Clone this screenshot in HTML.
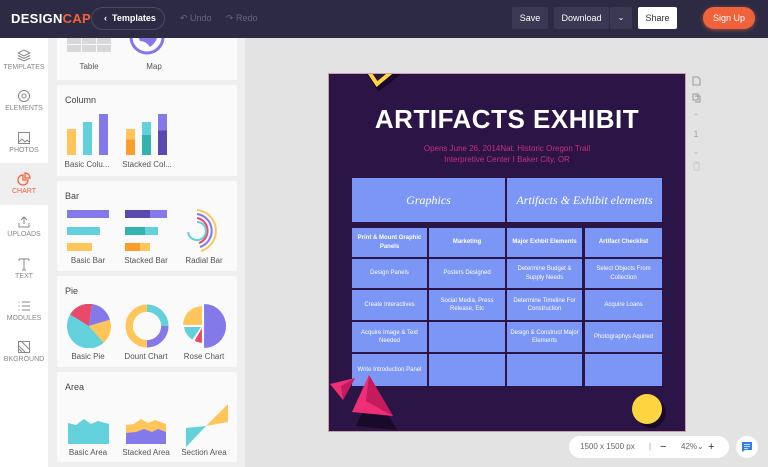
<!DOCTYPE html>
<html><head><meta charset="utf-8"><style>
*{margin:0;padding:0;box-sizing:border-box}
body{width:768px;height:467px;overflow:hidden;background:#e3e3e3;font-family:"Liberation Sans",sans-serif;position:relative}
.a{position:absolute}
.top{left:0;top:0;width:768px;height:38px;background:#2d2b44;z-index:5}
.nav{left:0;top:38px;width:48px;height:429px;background:#fff}
.ni{position:absolute;left:0;width:48px;text-align:center;font-size:7px;color:#888}
.panel{left:48px;top:38px;width:197px;height:429px;background:#efefef;overflow:hidden}
.card{position:absolute;left:9px;width:180px;background:#fafafa;border-radius:2px}
.ct{position:absolute;left:8px;top:10px;font-size:9px;color:#444}
.lb{position:absolute;font-size:8px;color:#555;text-align:center;width:60px}
.c{position:absolute;background:#7b96f5;color:#fff;font-size:6px;text-align:center;display:flex;align-items:center;justify-content:center;line-height:8.5px;padding:0 2px}
.h{font-weight:bold}
</style></head><body>
<div class="a top">
 <div class="a" style="left:11px;top:11px;font-size:13px;font-weight:bold;color:#fff;letter-spacing:0.3px">DESIGN<span style="color:#f0623a">CAP</span></div>
 <div class="a" style="left:91px;top:7px;width:74px;height:23px;border:1px solid #4a4862;border-radius:12px;color:#fff;font-size:9px;font-weight:bold;line-height:21px;padding-left:12px">&lsaquo;&nbsp;&nbsp;Templates</div>
 <div class="a" style="left:180px;top:13px;font-size:9px;color:#66657a">↶ Undo</div>
 <div class="a" style="left:226px;top:13px;font-size:9px;color:#66657a">↷ Redo</div>
 <div class="a" style="left:512px;top:7px;width:36px;height:22px;background:#3a3852;border-radius:2px;color:#fff;font-size:9px;text-align:center;line-height:22px">Save</div>
 <div class="a" style="left:554px;top:7px;width:55px;height:22px;background:#3a3852;border-radius:2px;color:#fff;font-size:9px;text-align:center;line-height:22px">Download</div>
 <div class="a" style="left:610px;top:7px;width:22px;height:22px;background:#3a3852;border-radius:2px;color:#fff;font-size:8px;text-align:center;line-height:22px">&#8964;</div>
 <div class="a" style="left:638px;top:7px;width:39px;height:22px;background:#fff;border-radius:2px;color:#333;font-size:9px;text-align:center;line-height:22px">Share</div>
 <div class="a" style="left:703px;top:7px;width:52px;height:22px;background:#f0623a;border-radius:11px;color:#fff;font-size:9px;text-align:center;line-height:22px;box-shadow:0 1px 4px rgba(240,98,58,.6)">Sign Up</div>
</div>
<div class="a nav">
 <div class="ni" style="top:10px"><svg width="14" height="14" viewBox="0 0 14 14" fill="none" stroke="#888"><path d="M7 2L13 5 7 8 1 5Z M1 7.5L7 10.5 13 7.5 M1 10L7 13 13 10"/></svg><br>TEMPLATES</div>
 <div class="ni" style="top:51px"><svg width="14" height="14" viewBox="0 0 14 14" fill="none" stroke="#888"><circle cx="7" cy="7" r="5.5"/><circle cx="7" cy="7" r="2"/></svg><br>ELEMENTS</div>
 <div class="ni" style="top:93px"><svg width="14" height="14" viewBox="0 0 14 14" fill="none" stroke="#888"><rect x="1.5" y="1.5" width="11" height="11"/><path d="M2 11L5 8 8 11 10 9 12 11"/></svg><br>PHOTOS</div>
 <div class="ni" style="top:125px;height:42px;background:#efefef;padding-top:9px;color:#f0623a"><svg width="14" height="14" viewBox="0 0 14 14" fill="none" stroke="#f0623a" stroke-width="1.3"><path d="M6 3A5 5 0 1 0 11 8H6Z M8 1V6H13A5 5 0 0 0 8 1Z"/></svg><br>CHART</div>
 <div class="ni" style="top:177px"><svg width="14" height="14" viewBox="0 0 14 14" fill="none" stroke="#888"><path d="M7 9V2 M4 5L7 2 10 5 M2 8V12H12V8"/></svg><br>UPLOADS</div>
 <div class="ni" style="top:219px"><svg width="14" height="14" viewBox="0 0 14 14" fill="none" stroke="#888"><path d="M2 2H12 M7 2V13 M5 13H9 M2 2V4 M12 2V4"/></svg><br>TEXT</div>
 <div class="ni" style="top:261px"><svg width="14" height="14" viewBox="0 0 14 14" fill="none" stroke="#888"><path d="M5 3H13 M5 7H13 M5 11H13 M1.5 3H2.5 M1.5 7H2.5 M1.5 11H2.5"/></svg><br>MODULES</div>
 <div class="ni" style="top:302px"><svg width="14" height="14" viewBox="0 0 14 14" fill="none" stroke="#888"><rect x="1.5" y="1.5" width="11" height="11"/><path d="M2 6L8 12 M2 9L5 12 M5 2L12 9"/></svg><br>BKGROUND</div>
</div>
<div class="a panel">
 <div class="card" style="top:-4px;height:46px">
  <div class="a" style="left:10px;top:4px;width:44px;height:14px;background:repeating-linear-gradient(90deg,#d8d8d8 0 14px,transparent 14px 15px)"></div>
  <div class="a" style="left:10px;top:10px;width:44px;height:1px;background:#fafafa"></div>
  <svg class="a" style="left:71px;top:-16px" width="38" height="38" viewBox="0 0 38 38"><circle cx="19" cy="19" r="16" fill="none" stroke="#8478e8" stroke-width="3"/><path d="M8 14Q14 9 20 15T30 17Q28 25 22 29Q18 23 12 23Z" fill="#8478e8"/></svg>
  <div class="lb" style="left:2px;top:28px">Table</div><div class="lb" style="left:67px;top:28px">Map</div>
 </div>
 <div class="card" style="top:47px;height:91px">
  <div class="ct">Column</div>
  <div class="a" style="left:10px;top:44px;width:9px;height:26px;background:#fdc55a"></div>
  <div class="a" style="left:26px;top:37px;width:9px;height:33px;background:#62d1dc"></div>
  <div class="a" style="left:42px;top:29px;width:9px;height:41px;background:#8479e8"></div>
  <div class="a" style="left:69px;top:44px;width:9px;height:26px;background:linear-gradient(#fdc55a 0 40%,#fb9d2a 40%)"></div>
  <div class="a" style="left:85px;top:37px;width:9px;height:33px;background:linear-gradient(#62d1dc 0 40%,#33b3ad 40%)"></div>
  <div class="a" style="left:101px;top:29px;width:9px;height:41px;background:linear-gradient(#8479e8 0 40%,#5a4aad 40%)"></div>
  <div class="lb" style="left:0;top:75px">Basic Colu...</div><div class="lb" style="left:60px;top:75px">Stacked Col...</div>
 </div>
 <div class="card" style="top:143px;height:90px">
  <div class="ct">Bar</div>
  <div class="a" style="left:10px;top:29px;width:42px;height:8px;background:#8479e8"></div>
  <div class="a" style="left:10px;top:46px;width:33px;height:8px;background:#62d1dc"></div>
  <div class="a" style="left:10px;top:62px;width:25px;height:8px;background:#fdc55a"></div>
  <div class="a" style="left:68px;top:29px;width:42px;height:8px;background:linear-gradient(90deg,#5a4aad 0 60%,#8479e8 60%)"></div>
  <div class="a" style="left:68px;top:46px;width:33px;height:8px;background:linear-gradient(90deg,#33b3ad 0 60%,#62d1dc 60%)"></div>
  <div class="a" style="left:68px;top:62px;width:25px;height:8px;background:linear-gradient(90deg,#fb9d2a 0 60%,#fdc55a 60%)"></div>
  <svg class="a" style="left:128px;top:27px;overflow:visible" width="44" height="46" viewBox="0 0 44 46" fill="none" stroke-width="2"><path d="M12 2A21 21 0 0 1 16 43" stroke="#fdc55a"/><path d="M12 6A17 17 0 0 1 15 39" stroke="#8479e8"/><path d="M12 10A13 13 0 0 1 14 35" stroke="#ea4a6a"/><path d="M12 14A9 9 0 1 1 3 24" stroke="#62d1dc"/></svg>
  <div class="lb" style="left:1px;top:75px">Basic Bar</div><div class="lb" style="left:59px;top:75px">Stacked Bar</div><div class="lb" style="left:117px;top:75px">Radial Bar</div>
 </div>
 <div class="card" style="top:238px;height:91px">
  <div class="ct">Pie</div>
  <svg class="a" style="left:10px;top:28px" width="44" height="44" viewBox="-21 -21 42 42"><path d="M0 0L-21 0A21 21 0 0 0 14 16Z" fill="#62d1dc"/><path d="M0 0L-21 0A21 21 0 0 1 -7 -20Z" fill="#62d1dc"/><path d="M0 0L-18 -11A21 21 0 0 1 3 -21Z" fill="#ea4a6a"/><path d="M0 0L3 -21A21 21 0 0 1 20 -6Z" fill="#8479e8"/><path d="M0 0L20 -6A21 21 0 0 1 14 16Z" fill="#fdc55a"/></svg>
  <svg class="a" style="left:68px;top:28px" width="44" height="44" viewBox="-21 -21 42 42" fill="none" stroke-width="7"><circle r="17" stroke="#fdc55a"/><path d="M0 -17A17 17 0 0 1 17 0" stroke="#62d1dc"/><path d="M17 0A17 17 0 0 1 0 17" stroke="#8479e8"/></svg>
  <svg class="a" style="left:124px;top:28px;overflow:visible" width="44" height="44" viewBox="-21 -21 42 42"><path d="M1 -21A21 21 0 0 1 1 21Z" fill="#8479e8"/><path d="M-1 -1H-19A18 18 0 0 1 -1 -19Z" fill="#fdc55a"/><path d="M-2 1L-18 1A16 16 0 0 0 -10 13Z" fill="#62d1dc"/><path d="M-1 2L-8 14A14 14 0 0 0 -1 16Z" fill="#ea4a6a"/></svg>
  <div class="lb" style="left:1px;top:76px">Basic Pie</div><div class="lb" style="left:59px;top:76px">Dount Chart</div><div class="lb" style="left:117px;top:76px">Rose Chart</div>
 </div>
 <div class="card" style="top:334px;height:90px">
  <div class="ct">Area</div>
  <svg class="a" style="left:9px;top:30px" width="170" height="50" viewBox="0 0 170 50"><path d="M2 21L10 23 18 17 25 22 32 19 43 22V42H2Z" fill="#62d1dc"/><path d="M60 23L68 22 75 17 82 21 89 18 100 22V42H60Z" fill="#fdc55a"/><path d="M60 31L70 30 78 27 86 30 92 27 100 30V42H60Z" fill="#8479e8"/><path d="M120 26L140 24 120 45Z" fill="#62d1dc"/><path d="M140 24L162 2V20Z" fill="#fdc55a"/></svg>
  <div class="lb" style="left:1px;top:76px">Basic Area</div><div class="lb" style="left:59px;top:76px">Stacked Area</div><div class="lb" style="left:117px;top:76px">Section Area</div>
 </div>
</div>
<div class="a" style="left:328px;top:73px;width:358px;height:359px;background:#2b1446;border:1px solid #c9a0a8;overflow:hidden">
 <svg class="a" style="left:30px;top:-8px" width="60" height="30" viewBox="0 0 60 30"><path d="M8 4L20 22 46 2" fill="none" stroke="#180a2c" stroke-width="5"/><path d="M6 0L18 18 42 -2" fill="none" stroke="#fdd540" stroke-width="4"/></svg>
 <div class="a" style="left:0;width:356px;top:30px;text-align:center;color:#fff;font-size:26px;font-weight:bold;letter-spacing:0.5px">ARTIFACTS EXHIBIT</div>
 <div class="a" style="left:0;width:356px;top:69px;text-align:center;color:#c8307e;font-size:8px;line-height:11px">Opens June 26. 2014Nat. Historic Oregon Trail<br>Interpretive Center I Baker City, OR</div>
 <div class="a" style="left:307px;top:324px;width:30px;height:30px;border-radius:50%;background:#1a0a2a"></div>
 <div class="a" style="left:303px;top:320px;width:30px;height:30px;border-radius:50%;background:#fdd540"></div>
</div>
<div class="c" style="left:352px;top:178px;width:153px;height:44px;font-family:'Liberation Serif',serif;font-style:italic;font-size:12px">Graphics</div>
<div class="c" style="left:507px;top:178px;width:155px;height:44px;font-family:'Liberation Serif',serif;font-style:italic;font-size:12px">Artifacts &amp; Exhibit elements</div>
<div class="c h" style="left:352px;top:228px;width:75px;height:29px">Print &amp; Mount Graphic Panels</div>
<div class="c h" style="left:429px;top:228px;width:76px;height:29px">Marketing</div>
<div class="c h" style="left:507px;top:228px;width:75px;height:29px">Major Exhbit Elements</div>
<div class="c h" style="left:585px;top:228px;width:77px;height:29px">Artifact Checklist</div>
<div class="c" style="left:352px;top:259px;width:75px;height:29px">Design Panels</div>
<div class="c" style="left:429px;top:259px;width:76px;height:29px">Posters Designed</div>
<div class="c" style="left:507px;top:259px;width:75px;height:29px">Determine Budget &amp; Supply Needs</div>
<div class="c" style="left:585px;top:259px;width:77px;height:29px">Select Objects From Collection</div>
<div class="c" style="left:352px;top:290px;width:75px;height:30px">Create Interactives</div>
<div class="c" style="left:429px;top:290px;width:76px;height:30px">Social Media, Press Release, Etc</div>
<div class="c" style="left:507px;top:290px;width:75px;height:30px">Determine Timeline For Construction</div>
<div class="c" style="left:585px;top:290px;width:77px;height:30px">Acquire Loans</div>
<div class="c" style="left:352px;top:322px;width:75px;height:30px">Acquire Image &amp; Text Needed</div>
<div class="c" style="left:429px;top:322px;width:76px;height:30px"></div>
<div class="c" style="left:507px;top:322px;width:75px;height:30px">Design &amp; Construct Major Elements</div>
<div class="c" style="left:585px;top:322px;width:77px;height:30px">Photographys Aquired</div>
<div class="c" style="left:352px;top:354px;width:75px;height:32px">Write Introduction Panel</div>
<div class="c" style="left:429px;top:354px;width:76px;height:32px"></div>
<div class="c" style="left:507px;top:354px;width:75px;height:32px"></div>
<div class="c" style="left:585px;top:354px;width:77px;height:32px"></div>
<svg class="a" style="left:328px;top:373px" width="70" height="60" viewBox="0 0 70 60"><path d="M41 2L65 43 24 39Z" fill="#1a0a2a" transform="translate(4,14)"/><path d="M41 2L65 43 24 39Z" fill="#ee2f78"/><path d="M41 2L65 43 38 28Z" fill="#c41a5e"/><path d="M2 11L27 5 15 27Z" fill="#ee2f78"/><path d="M27 5L15 27 13 13Z" fill="#c41a5e"/></svg>
<div class="a" style="left:690px;top:75px;color:#aaa;font-size:9px;line-height:17px;text-align:center;width:12px">
 <svg width="9" height="10" viewBox="0 0 9 10" fill="none" stroke="#999"><path d="M1 1H6L8 3V9H1Z"/></svg><br>
 <svg width="9" height="10" viewBox="0 0 9 10" fill="none" stroke="#999"><path d="M1 1H6V7H1Z M3 3H8V9H3"/></svg><br>
 <span style="color:#bbb">&#8963;</span><br>1<br><span style="color:#bbb">&#8964;</span><br>
 <svg width="9" height="10" viewBox="0 0 9 10" fill="none" stroke="#ccc"><path d="M1 2H8 M2 2V9H7V2 M3 1H6"/></svg>
</div>
<div class="a" style="left:569px;top:436px;width:160px;height:22px;background:#fff;border-radius:11px;font-size:8px;color:#666;line-height:22px">
 <span class="a" style="left:11px">1500 x 1500 px</span><span class="a" style="left:80px;color:#999">|</span><span class="a" style="left:91px;font-size:11px;color:#333">−</span><span class="a" style="left:112px">42%&#8964;</span><span class="a" style="left:139px;font-size:11px;color:#333">+</span>
</div>
<div class="a" style="left:736px;top:436px;width:22px;height:22px;background:#fff;border-radius:50%"><svg class="a" style="left:5px;top:5px" width="12" height="12" viewBox="0 0 12 12"><path d="M1 1H11V9H4L1 11Z" fill="#2e7ef0"/><path d="M3 3.5H9 M3 5.5H9 M3 7.5H7" stroke="#fff" stroke-width=".8"/></svg></div>
</body></html>
